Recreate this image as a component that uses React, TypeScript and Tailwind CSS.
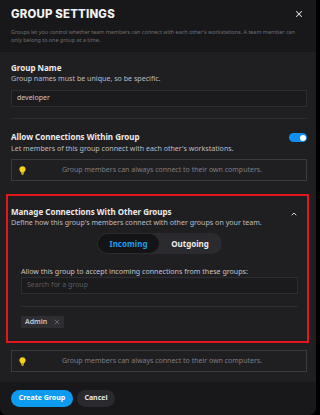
import { X, ChevronUp } from 'lucide-react';

const Bulb = () => (
  <svg width="7" height="9" viewBox="0 0 7 9" className="shrink-0">
    <path d="M3.5 0.3C1.7 0.3 0.4 1.6 0.4 3.3c0 1.1 0.6 1.8 1.1 2.4 0.3 0.4 0.5 0.7 0.5 1.1h3c0-0.4 0.2-0.7 0.5-1.1 0.5-0.6 1.1-1.3 1.1-2.4C6.6 1.6 5.3 0.3 3.5 0.3z" fill="#f2d21b" />
    <rect x="2.1" y="7.2" width="2.8" height="0.8" rx="0.3" fill="#f2d21b" />
    <rect x="2.5" y="8.2" width="2" height="0.7" rx="0.3" fill="#f2d21b" />
  </svg>
);

const InfoBox = () => (
  <div className="flex h-[22px] items-center border border-[#3b3b3f] pl-[7px] pr-[8px]">
    <Bulb />
    <p className="flex-1 text-center text-[7px] leading-[10px] text-[#7d7d82]">
      Group members can always connect to their own computers.
    </p>
  </div>
);

export default function App() {
  return (
    <div className="h-[415px] w-[320px] overflow-hidden bg-black" style={{ fontFamily: '"Noto Sans", sans-serif' }}>
      <div className="flex h-[415px] w-[316px] flex-col overflow-hidden rounded-b-[7px]">
        {/* Header */}
        <div className="h-[52px] shrink-0 bg-[#18181b] pl-[11px] pr-[12px] pt-[9px]">
          <div className="flex items-start justify-between">
            <h1
              className="text-[11.4px] font-extrabold leading-[11px] tracking-[0.2px] text-[#f1f1f1]"
              style={{ fontFamily: 'Inter, sans-serif' }}
            >
              GROUP SETTINGS
            </h1>
            <X size={10} strokeWidth={2.5} color="#e5e5e5" />
          </div>
          <p className="mt-[8px] w-[285px] text-[5.4px] leading-[8px] text-[#6f6f74]">
            Groups let you control whether team members can connect with each other's workstations. A team member can only belong to one group at a time.
          </p>
        </div>

        {/* Body */}
        <div className="flex-1 bg-[#1f1f22] pl-[11px] pr-[9px] pt-[10px]">
          <h2 className="text-[8px] font-bold leading-[12px] text-[#ececec]">Group Name</h2>
          <p className="text-[7.1px] leading-[9px] text-[#bdbdc2]">Group names must be unique, so be specific.</p>
          <div className="mt-[7px] flex h-[17px] items-center border border-[#2e2e32] bg-[#1b1b1e] px-[5px] text-[7px] text-[#c9c9cd]">
            developer
          </div>
          <div className="mt-[11px] h-px bg-[#2d2d31]" />

          <div className="mt-[12px] flex items-start justify-between">
            <div>
              <h2 className="text-[8px] font-bold leading-[12px] text-[#ececec]">Allow Connections Within Group</h2>
              <p className="text-[7.1px] leading-[10px] text-[#bdbdc2]">Let members of this group connect with each other's workstations.</p>
            </div>
            <div className="mt-[2px] flex h-[9px] w-[18px] items-center justify-end rounded-full bg-[#0f8ff0] pr-[1.5px]">
              <div className="h-[6px] w-[6px] rounded-full bg-white" />
            </div>
          </div>
          <div className="mt-[6px]">
            <InfoBox />
          </div>

          {/* Manage connections */}
          <div className="ml-[-5px] mt-[13px] h-[149px] w-[303px] border-2 border-[#e3161c] pl-[3px] pr-[9px] pt-[10px]">
            <div className="flex items-start justify-between">
              <div>
                <h2 className="text-[8px] font-bold leading-[12px] text-[#ececec]">Manage Connections With Other Groups</h2>
                <p className="text-[7.1px] leading-[9px] text-[#bdbdc2]">Define how this group's members connect with other groups on your team.</p>
              </div>
              <ChevronUp size={8} strokeWidth={3} color="#d4d4d8" className="mt-[4px]" />
            </div>
            <div className="mt-[6px] flex justify-center pl-[10px]">
              <div className="flex h-[21px] w-[125px] items-center rounded-full bg-[#2b2b2f] p-px">
                <div className="flex h-[19px] w-[61px] items-center justify-center rounded-full bg-[#141417] text-[8px] font-bold text-[#1d9bf0]">
                  Incoming
                </div>
                <div className="flex h-[19px] flex-1 items-center justify-center text-[8px] font-bold text-[#ededed]">
                  Outgoing
                </div>
              </div>
            </div>
            <div className="pl-[10px]">
              <p className="mt-[12px] text-[7.1px] leading-[10px] text-[#c4c4c8]">
                Allow this group to accept incoming connections from these groups:
              </p>
              <div className="mt-px flex h-[17px] items-center border border-[#2e2e32] bg-[#1b1b1e] px-[5px] text-[7px] text-[#5c5c61]">
                Search for a group
              </div>
              <div className="mt-[12px] h-px bg-[#2d2d31]" />
              <div className="mt-[9px] flex h-[12px] w-[43px] items-center gap-[6px] bg-[#2e2e32] pl-[4px] text-[7px] font-semibold text-[#c9c9cd]">
                Admin
                <X size={8} strokeWidth={1.8} color="#8a8a90" />
              </div>
            </div>
          </div>

          <div className="mt-[7px]">
            <InfoBox />
          </div>
        </div>

        {/* Footer */}
        <div className="flex h-[33px] shrink-0 items-start gap-[4px] bg-[#18181b] pl-[11px] pt-[8px]">
          <button className="flex h-[17px] w-[62px] items-center justify-center rounded-full bg-[#0d9bf2] text-[7px] font-bold text-white">
            Create Group
          </button>
          <button className="flex h-[17px] w-[38px] items-center justify-center rounded-full bg-[#2a2a2e] text-[7px] font-bold text-[#e4e4e7]">
            Cancel
          </button>
        </div>
      </div>
    </div>
  );
}
